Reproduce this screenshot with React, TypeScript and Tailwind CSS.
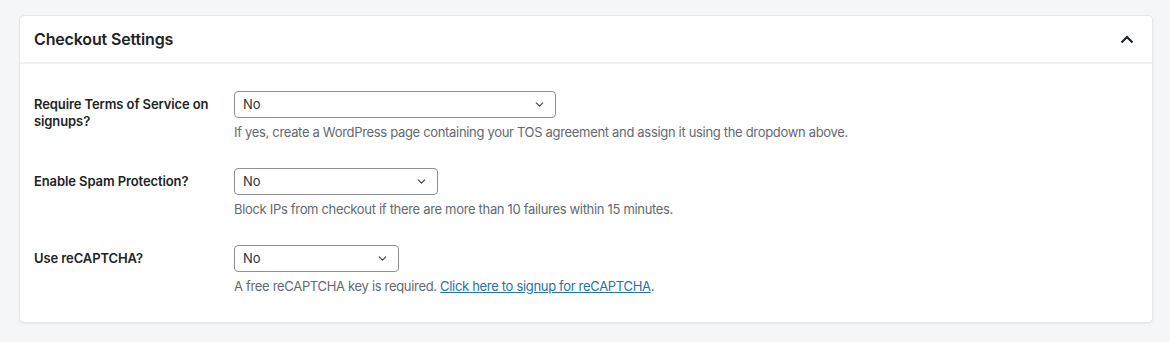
import { ChevronDown } from "lucide-react";

// ── Settings rows ─────────────────────────────────────────────

type Row = {
  label: string;
  width: string;
  help: React.ReactNode;
};

const ROWS: Row[] = [
  {
    label: "Require Terms of Service on signups?",
    width: "w-[322px]",
    help: "If yes, create a WordPress page containing your TOS agreement and assign it using the dropdown above.",
  },
  {
    label: "Enable Spam Protection?",
    width: "w-[204px]",
    help: "Block IPs from checkout if there are more than 10 failures within 15 minutes.",
  },
  {
    label: "Use reCAPTCHA?",
    width: "w-[165px]",
    help: (
      <>
        A free reCAPTCHA key is required.{" "}
        <a href="#" className="text-[#2271b1] underline">
          Click here to signup for reCAPTCHA
        </a>
        .
      </>
    ),
  },
];

function FakeSelect({ width }: { width: string }) {
  return (
    <div
      className={`${width} h-[27px] flex items-center justify-between rounded-[4px] border border-[#8c8f94] bg-white pl-[8px] pr-[9px] text-[13px] text-[#2c3338]`}
    >
      <span>No</span>
      <ChevronDown size={13} strokeWidth={2} className="text-[#3c434a]" />
    </div>
  );
}

export default function App() {
  return (
    <div
      className="min-h-[342px] bg-[#f5f6f8] pt-[15px] px-[19px]"
      style={{ fontFamily: "Inter, 'Noto Sans', sans-serif" }}
    >
      <div className="w-[1134px] rounded-[5px] border border-[#e6e7e9] bg-white shadow-[0_1px_2px_rgba(0,0,0,0.06)]">
        <div className="h-[48px] flex items-center justify-between pl-[14px] pr-[18px] border-b-2 border-[#f0f0f1]">
          <h2 className="text-[16px] font-semibold text-[#1d2327] tracking-[-0.15px]">Checkout Settings</h2>
          <svg width="14" height="9" viewBox="0 0 14 9" fill="none">
            <path d="M1.5 7.5L7 2L12.5 7.5" stroke="#1d2327" strokeWidth="2.2" />
          </svg>
        </div>
        <div className="pt-[27px] pb-[27px] px-[14px] flex flex-col gap-[27px]">
          {ROWS.map((row) => (
            <div key={row.label} className="flex">
              <div className="w-[200px] pt-[5px] pr-[10px] text-[13px] leading-[17px] font-semibold text-[#1d2327] tracking-[-0.1px]">
                {row.label}
              </div>
              <div>
                <FakeSelect width={row.width} />
                <p className="mt-[5px] text-[13px] leading-[18px] text-[#646970] tracking-[-0.32px]">{row.help}</p>
              </div>
            </div>
          ))}
        </div>
      </div>
    </div>
  );
}
